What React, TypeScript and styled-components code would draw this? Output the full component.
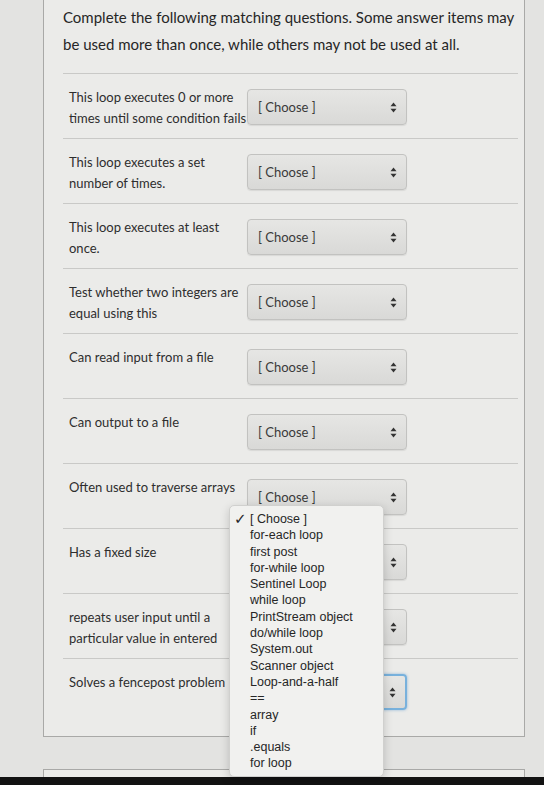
import React from "react";
import styled, { createGlobalStyle } from "styled-components";

const GlobalStyle = createGlobalStyle`
	html, body {
		margin: 0;
		padding: 0;
		background-color: #e3e3e1;
	}
	* {
		box-sizing: border-box;
	}
`;

const options = [
	"[ Choose ]",
	"for-each loop",
	"first post",
	"for-while loop",
	"Sentinel Loop",
	"while loop",
	"PrintStream object",
	"do/while loop",
	"System.out",
	"Scanner object",
	"Loop-and-a-half",
	"==",
	"array",
	"if",
	".equals",
	"for loop",
];

const questions = [
	"This loop executes 0 or more times until some condition fails",
	"This loop executes a set number of times.",
	"This loop executes at least once.",
	"Test whether two integers are equal using this",
	"Can read input from a file",
	"Can output to a file",
	"Often used to traverse arrays",
	"Has a fixed size",
	"repeats user input until a particular value in entered",
	"Solves a fencepost problem",
];

const Arrows = () => (
	<svg width='7' height='11' viewBox='0 0 7 11'>
		<path d='M3.5 0.5 L6.5 4.3 L0.5 4.3 Z' fill='#333' />
		<path d='M3.5 10.5 L6.5 6.7 L0.5 6.7 Z' fill='#333' />
	</svg>
);

const Select = ({ open, focused }: { open?: boolean; focused?: boolean }) => (
	<SelectHold>
		<SelectBox focused={focused}>
			<span>[ Choose ]</span>
			<Arrows />
		</SelectBox>
		{open && (
			<Menu>
				{options.map((o, i) => (
					<MenuItem key={o}>
						<Check>{i === 0 ? "✓" : ""}</Check>
						{o}
					</MenuItem>
				))}
			</Menu>
		)}
	</SelectHold>
);

const App = () => {
	return (
		<Page>
			<GlobalStyle />
			<Card>
				<Heading>
					Complete the following matching questions. Some answer items may
					be used more than once, while others may not be used at all.
				</Heading>
				{questions.map((q, i) => (
					<Row key={q}>
						<Label>{q}</Label>
						<Select open={i === 6} focused={i === 9} />
					</Row>
				))}
			</Card>
			<NextCard />
			<Bezel />
		</Page>
	);
};

export default App;

const Page = styled.div`
	display: flex;
	flex-direction: column;
	padding-left: 43px;
	height: 785px;
	overflow: hidden;
	font-family: Lato, "Open Sans", sans-serif;
	color: #2b2b2b;
`;

const Card = styled.div`
	width: 482px;
	flex-shrink: 0;
	margin-top: -1px;
	padding: 4px 6px 13px 19px;
	background-color: #ebebe9;
	border: 1px solid #a9a9a7;
`;

const Heading = styled.p`
	margin: 0 0 15px 0;
	font-size: 15px;
	line-height: 27px;
	color: #262626;
`;

const Row = styled.div`
	height: 65px;
	display: flex;
	align-items: flex-start;
	padding: 0 6px;
	border-top: 1px solid #c9c9c7;
`;

const Label = styled.div`
	width: 178px;
	padding-top: 13px;
	font-size: 13px;
	line-height: 21px;
	color: #2e2e2e;
`;

const SelectHold = styled.div`
	position: relative;
	margin-top: 15px;
`;

const SelectBox = styled.div<{ focused?: boolean }>`
	width: 160px;
	height: 36px;
	display: flex;
	align-items: center;
	justify-content: space-between;
	padding: 0 9px 0 10px;
	font-size: 13px;
	color: #3a3a3a;
	background: linear-gradient(#e6e6e4, #d9d9d7);
	border: ${(props) => (props.focused ? "2px solid #78b1dc" : "1px solid #c2c2c0")};
	box-shadow: ${(props) =>
		props.focused ? "0 0 3px rgba(80, 150, 210, 0.6)" : "0 1px 1px rgba(0, 0, 0, 0.08)"};
	border-radius: 4px;
`;

const Menu = styled.div`
	position: absolute;
	top: 26px;
	left: -18px;
	width: 155px;
	padding: 5px 0 4px 0;
	z-index: 10;
	background-color: #f1f1ef;
	border: 1px solid #d0d0ce;
	border-radius: 5px;
	box-shadow: 0 3px 10px rgba(0, 0, 0, 0.18);
	font-family: "Liberation Sans", Arial, sans-serif;
	font-size: 12.5px;
	color: #262626;
`;

const MenuItem = styled.div`
	display: flex;
	align-items: center;
	height: 16.3px;
	line-height: 16.3px;
	white-space: nowrap;
`;

const Check = styled.span`
	width: 20px;
	padding-left: 4px;
	font-size: 15px;
	font-weight: bold;
	font-family: "DejaVu Sans", sans-serif;
`;

const NextCard = styled.div`
	width: 482px;
	height: 8px;
	margin-top: 32px;
	flex-shrink: 0;
	background-color: #ebebe9;
	border: 1px solid #a9a9a7;
	border-bottom: none;
`;

const Bezel = styled.div`
	flex: 1;
	margin-left: -43px;
	background-color: #121212;
`;
